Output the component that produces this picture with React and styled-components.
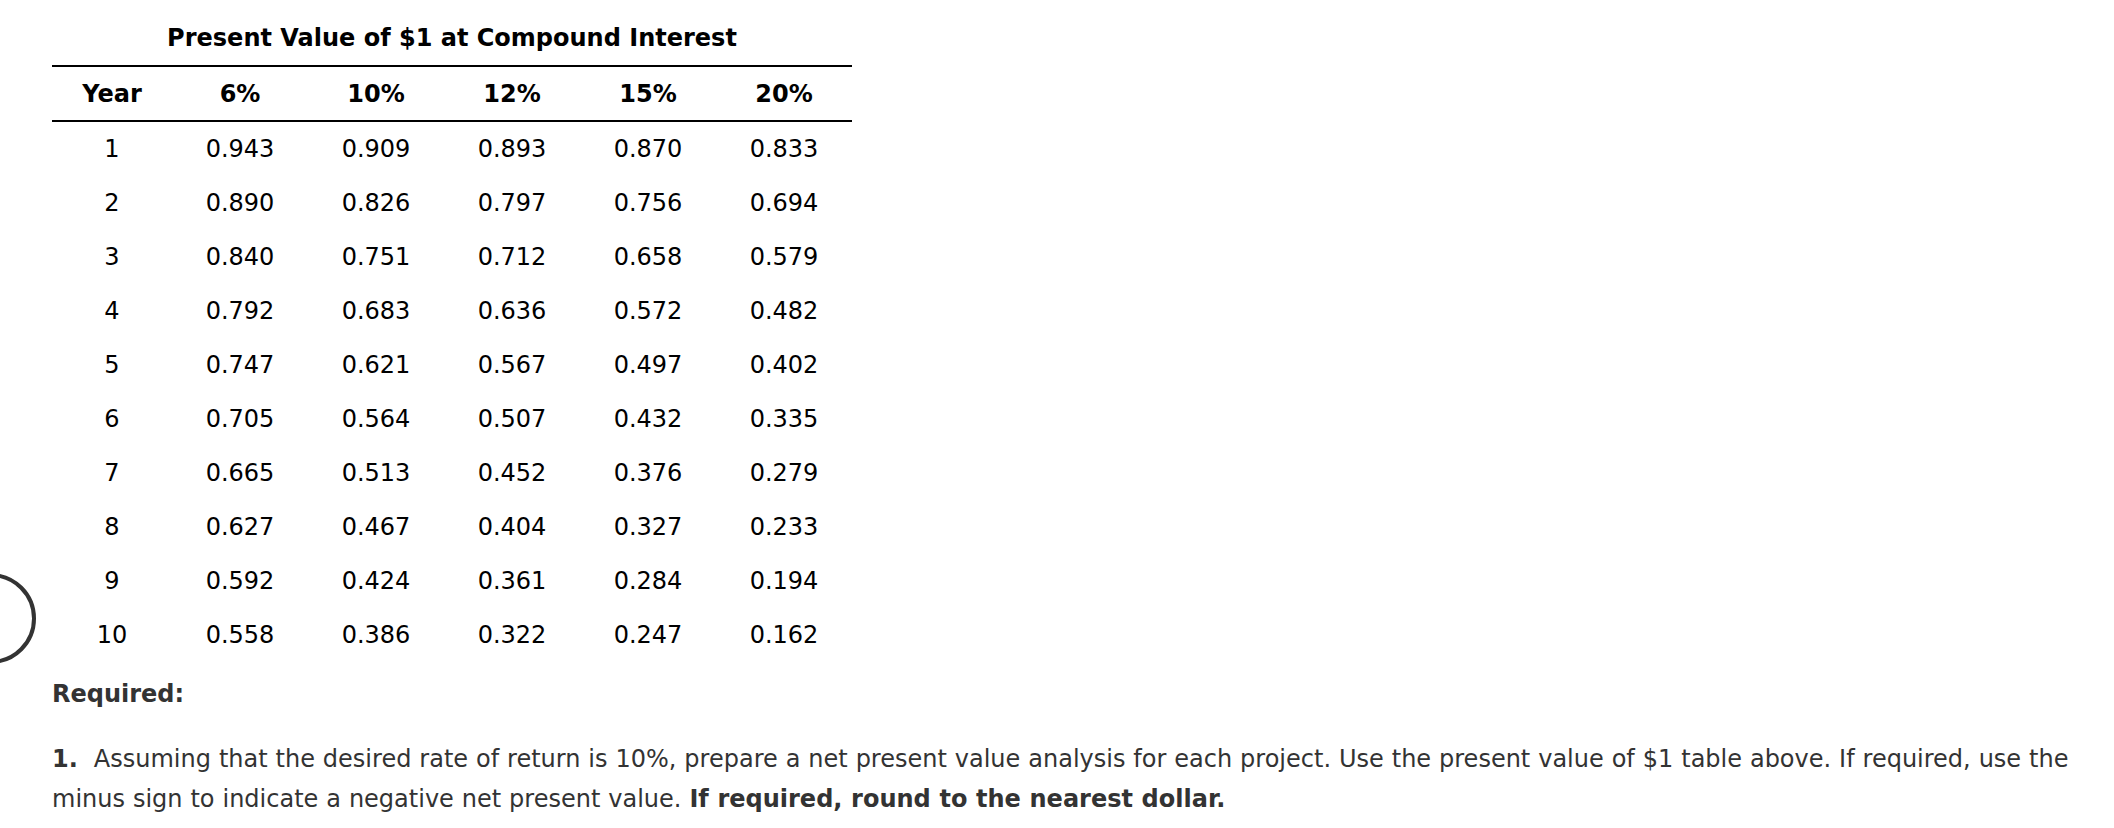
import React from "react"
import styled, { createGlobalStyle } from "styled-components"

const GlobalStyle = createGlobalStyle`
  html, body {
    margin: 0;
    padding: 0;
    background: #fff;
  }
  body {
    font-family: Verdana, "DejaVu Sans", sans-serif;
  }
`

const Page = styled.div`
  position: relative;
  width: 2114px;
  height: 828px;
  overflow: hidden;
  padding: 23px 0 0 52px;
  box-sizing: border-box;
`

const Table = styled.table`
  width: 800px;
  border-collapse: collapse;
  table-layout: fixed;
  color: #000;
  font-size: 24px;
`

const Caption = styled.caption`
  font-weight: bold;
  font-size: 24px;
  line-height: 30px;
  padding-bottom: 12px;
  text-align: center;
`

const HeadCell = styled.th`
  width: ${p => p.$w}px;
  height: 53px;
  padding: 0;
  font-weight: bold;
  text-align: center;
  border-top: 2px solid #000;
  border-bottom: 2px solid #000;
`

const Cell = styled.td`
  height: 54px;
  padding: 0;
  text-align: center;
  vertical-align: middle;
`

const Required = styled.div`
  margin-top: 18px;
  font-size: 24px;
  line-height: 28px;
  font-weight: bold;
  color: #333;
`

const Question = styled.p`
  margin: 31px 0 0;
  padding-right: 20px;
  font-size: 24px;
  line-height: 40px;
  color: #333;
  word-spacing: 0.3px;

  b {
    font-weight: bold;
  }
`

const Num = styled.b`
  margin-right: 16px;
`

const SideButton = styled.div`
  position: absolute;
  left: -55px;
  top: 573px;
  width: 91px;
  height: 91px;
  box-sizing: border-box;
  border: 4px solid #333;
  border-radius: 50%;
  background: #fff;
`

const rates = ["6%", "10%", "12%", "15%", "20%"]

const rows = [
  [1, "0.943", "0.909", "0.893", "0.870", "0.833"],
  [2, "0.890", "0.826", "0.797", "0.756", "0.694"],
  [3, "0.840", "0.751", "0.712", "0.658", "0.579"],
  [4, "0.792", "0.683", "0.636", "0.572", "0.482"],
  [5, "0.747", "0.621", "0.567", "0.497", "0.402"],
  [6, "0.705", "0.564", "0.507", "0.432", "0.335"],
  [7, "0.665", "0.513", "0.452", "0.376", "0.279"],
  [8, "0.627", "0.467", "0.404", "0.327", "0.233"],
  [9, "0.592", "0.424", "0.361", "0.284", "0.194"],
  [10, "0.558", "0.386", "0.322", "0.247", "0.162"],
]

export default function App() {
  return (
    <>
      <GlobalStyle />
      <Page>
        <Table>
          <Caption>Present Value of $1 at Compound Interest</Caption>
          <thead>
            <tr>
              <HeadCell $w={120}>Year</HeadCell>
              {rates.map(r => (
                <HeadCell key={r} $w={136}>{r}</HeadCell>
              ))}
            </tr>
          </thead>
          <tbody>
            {rows.map(row => (
              <tr key={row[0]}>
                {row.map((v, i) => (
                  <Cell key={i}>{v}</Cell>
                ))}
              </tr>
            ))}
          </tbody>
        </Table>
        <Required>Required:</Required>
        <Question>
          <Num>1.</Num>Assuming that the desired rate of return is 10%, prepare a net present value analysis for each project. Use the present value of $1 table above. If required, use the minus sign to indicate a negative net present value. <b>If required, round to the nearest dollar.</b>
        </Question>
        <SideButton />
      </Page>
    </>
  )
}
